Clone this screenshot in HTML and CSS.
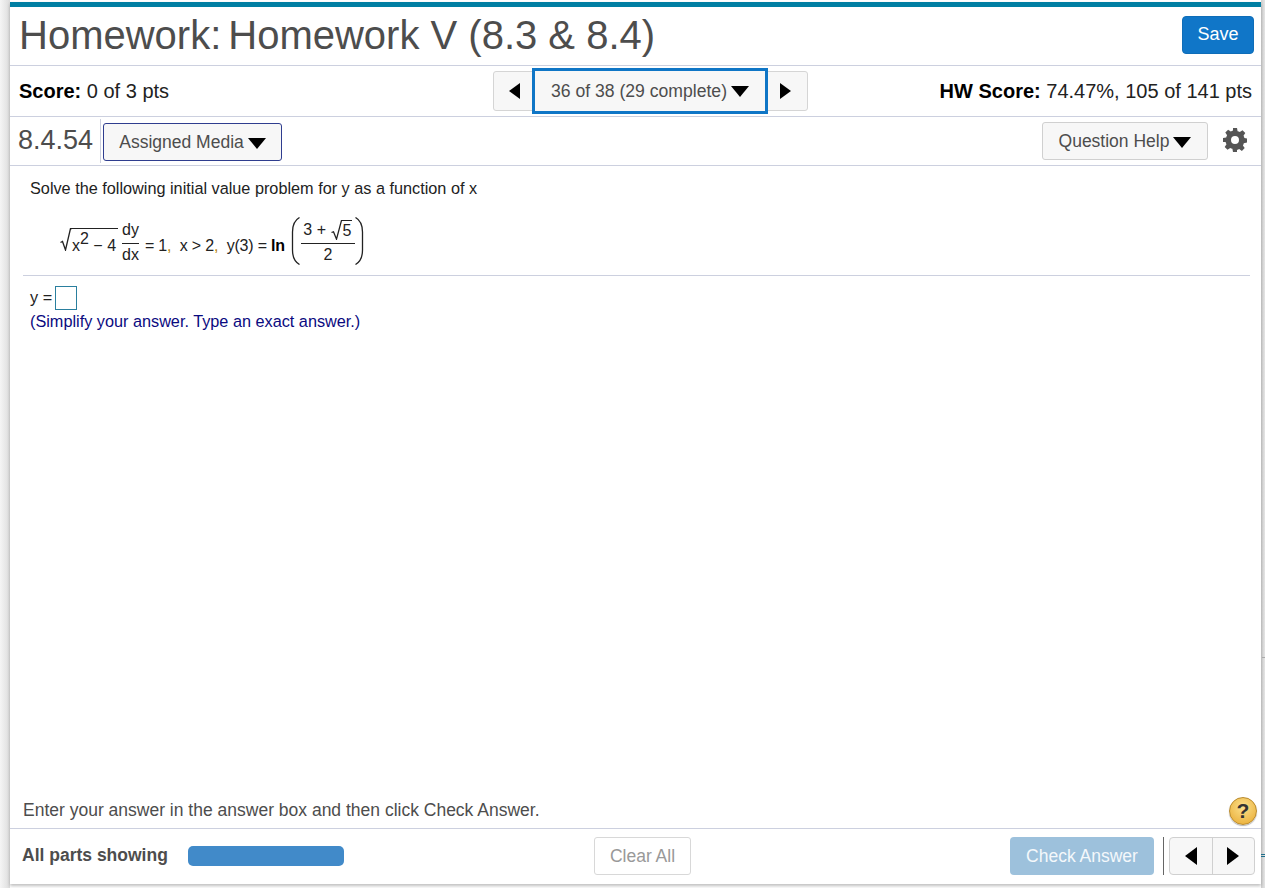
FILE: index.html
```html
<!DOCTYPE html>
<html lang="en">
<head>
<meta charset="utf-8">
<title>Homework V</title>
<link rel="stylesheet" href="styles.css">
</head>
<body>
<main class="panel">
  <header class="title-row">
    <h1 class="title"><span>Homework:</span><span class="title-name">Homework V (8.3 &amp; 8.4)</span></h1>
    <button class="btn-save">Save</button>
  </header>
  <section class="score-row">
    <div class="score"><b>Score:</b> 0 of 3 pts</div>
    <div class="pager">
      <span class="pager-arrow"><i class="tri-left"></i></span>
      <span class="pager-current">36 of 38 (29 complete)<i class="tri-down"></i></span>
      <span class="pager-arrow"><i class="tri-right"></i></span>
    </div>
    <div class="hw-score"><b>HW Score:</b> 74.47%, 105 of 141 pts</div>
  </section>
  <section class="q-row">
    <span class="q-num">8.4.54</span>
    <button class="btn-media">Assigned Media<i class="tri-down"></i></button>
    <span class="spacer"></span>
    <button class="btn-help">Question Help<i class="tri-down"></i></button>
    <svg class="gear" viewBox="0 0 24 24" aria-hidden="true"><path fill="#555" fill-rule="evenodd" d="M10 0h4l.6 3.2c.8.2 1.500.5 2.200.9L19.500 2.300l2.800 2.800-1.800 2.700c.4.700.7 1.400.9 2.200L24 10.600v4l-3.200.6c-.2.800-.5 1.500-.9 2.200l1.800 2.700-2.800 2.800-2.700-1.800c-.7.400-1.400.7-2.200.9L14 24h-4l-.6-3.200c-.8-.2-1.500-.5-2.200-.9l-2.700 1.800-2.800-2.800 1.800-2.700c-.4-.7-.7-1.400-.9-2.200L0 14v-4l3.200-.6c.2-.8.5-1.500.9-2.200L2.300 4.500l2.800-2.800 2.700 1.800c.7-.4 1.400-.7 2.200-.9zM12 8a4 4 0 1 0 0 8 4 4 0 0 0 0-8z"/></svg>
  </section>
  <section class="question">
    <p class="prompt">Solve the following initial value problem for y as a function of x</p>
    <div class="math">
      <span class="sqrt"><svg class="radical" viewBox="0 0 12 23" preserveAspectRatio="none" aria-hidden="true"><path d="M0.500 14.500 L2.500 13.500 L5.500 22 L10.500 .5 L12 .5" fill="none" stroke="#222" stroke-width="1.300"/></svg><span class="radicand">x<sup>2</sup> − 4</span></span>
      <span class="frac frac-dy"><span class="num">dy</span><span class="den">dx</span></span>
      <span class="m-text">= 1<span class="comma">,</span>&nbsp; x &gt; 2<span class="comma">,</span>&nbsp; y(3) = <b>ln</b></span>
      <svg class="paren paren-open" viewBox="0 0 10 48" aria-hidden="true"><path d="M8.500 .5 C4 3 1.500 8 1.500 15 V33 C1.500 40 4 45 8.500 47.500" fill="none" stroke="#222" stroke-width="1.300"/></svg>
      <span class="frac frac-wide"><span class="num">3 + <span class="sqrt small"><svg class="radical" viewBox="0 0 12 23" preserveAspectRatio="none" aria-hidden="true"><path d="M0.500 14.500 L2.500 13.500 L5.500 22 L10.500 .5 L12 .5" fill="none" stroke="#222" stroke-width="1.300"/></svg><span class="radicand">5</span></span></span><span class="den">2</span></span>
      <svg class="paren paren-close" viewBox="0 0 10 48" aria-hidden="true"><path d="M1.500 .5 C6 3 8.500 8 8.500 15 V33 C8.500 40 6 45 1.500 47.500" fill="none" stroke="#222" stroke-width="1.300"/></svg>
    </div>
    <hr class="rule">
    <div class="answer"><span class="answer-label">y =</span><span class="answer-box"></span></div>
    <p class="hint">(Simplify your answer. Type an exact answer.)</p>
  </section>
  <section class="instruction">
    <span>Enter your answer in the answer box and then click Check Answer.</span>
    <span class="help-badge">?</span>
  </section>
  <footer class="footer">
    <b class="parts">All parts showing</b>
    <span class="progress"></span>
    <button class="btn-clear">Clear All</button>
    <span class="spacer"></span>
    <button class="btn-check">Check Answer</button>
    <span class="divider"></span>
    <span class="nav-pair">
      <span class="nav-cell"><i class="tri-left"></i></span>
      <span class="nav-cell"><i class="tri-right"></i></span>
    </span>
  </footer>
</main>
<span class="edge-mark edge-a"></span>
<span class="edge-mark edge-b"></span>
</body>
</html>
```
FILE: styles.css
```css
* { box-sizing: border-box; }
html, body { margin: 0; height: 100%; }
body {
  background:
    linear-gradient(to right, #f5f5f5 0, #dcdcdc 10px, transparent 10px),
    linear-gradient(to left, #e4e4e4 0, #cfcfcf 4px, transparent 4px),
    #fff;
  padding: 2px 4px 4px 10px;
  font-family: "Liberation Sans", Arial, sans-serif;
  color: #4d4d4d;
  overflow: hidden;
  position: relative;
}
.panel {
  width: 1251px;
  height: 882px;
  background: #fff;
  border-top: 5px solid #007fa3;
  box-shadow: 0 2px 3px rgba(0,0,0,.25);
  display: flex;
  flex-direction: column;
}
button { font-family: inherit; cursor: pointer; }
i { display: inline-block; }
.tri-down { width: 0; height: 0; border-left: 9px solid transparent; border-right: 9px solid transparent; border-top: 11px solid #000; margin-left: 4px; vertical-align: -1px; }
.tri-left { width: 0; height: 0; border-top: 9px solid transparent; border-bottom: 9px solid transparent; border-right: 12px solid #000; }
.tri-right { width: 0; height: 0; border-top: 9px solid transparent; border-bottom: 9px solid transparent; border-left: 12px solid #000; }
.spacer { flex: 1; }

.title-row { height: 59px; flex: none; display: flex; align-items: center; justify-content: space-between; padding: 0 7px 2px 9px; border-bottom: 1px solid #ccd0df; }
.title { margin: 0; font-size: 40px; font-weight: 400; }
.title-name { margin-left: 7px; }
.btn-save { width: 72px; height: 38px; background: #1076c8; border: 1px solid #0f6db8; border-radius: 4px; color: #fff; font-size: 18px; padding: 0 0 2px; }

.score-row { height: 51px; flex: none; display: grid; grid-template-columns: 1fr auto 1fr; align-items: center; padding: 0 9px; border-bottom: 1px solid #ccd0df; font-size: 20px; color: #222; }
.score b, .hw-score b { color: #000; }
.hw-score { text-align: right; }
.pager { display: flex; height: 40px; width: 315px; margin-left: 30px; border: 1px solid #d5d5d5; border-radius: 3px; background: #f7f7f7; align-items: center; }
.pager-arrow { width: 38px; flex: none; display: flex; justify-content: center; }
.pager-arrow + .pager-current + .pager-arrow { width: 39px; }
.pager-arrow .tri-left { border-width: 8px 11px 8px 0; margin-left: 2px; }
.pager-arrow .tri-right { border-width: 8px 0 8px 11px; margin-right: 4px; }
.pager-current { width: 236px; flex: none; height: 46px; background: #f7f7f7; border: 3px solid #0f76c6; display: flex; align-items: center; justify-content: center; font-size: 17.6px; color: #4d4d4d; margin: -3px 0; }

.q-row { height: 49px; flex: none; display: flex; align-items: center; padding: 0 14px 0 8px; border-bottom: 1px solid #ccd0df; }
.q-num { font-size: 27px; width: 83px; height: 44px; line-height: 42px; border-right: 1px solid #ccd0df; margin-right: 2px; }
.btn-media { height: 38px; width: 179px; padding: 1px 0 0; background: #f7f7f7; border: 1px solid #2f3d8f; border-radius: 3px; color: #4d4d4d; font-size: 17.5px; margin-top: 1px; }
.btn-help { height: 38px; width: 166px; padding: 0; background: #f7f7f7; border: 1px solid #d0d0d0; border-radius: 3px; color: #4d4d4d; font-size: 17.5px; margin-right: 15px; }
.gear { width: 24px; height: 24px; flex: none; margin-top: -3px; }

.question { flex: 1; padding: 13px 11px 0 13px; color: #222; font-size: 16.25px; min-height: 0; }
.prompt { margin: 0 0 0 7px; line-height: 18px; }
.math { display: flex; align-items: center; margin: 20px 0 0 37px; height: 48px; color: #222; font-size: 16px; }
.sqrt { display: inline-flex; align-items: stretch; height: 23px; margin-bottom: 3px; }
.radical { width: 12px; height: 23px; flex: none; }
.radicand { border-top: 1px solid #222; line-height: 22px; padding: 6px 2px 0 0; white-space: nowrap; }
.radicand sup { font-size: 16px; line-height: 0; vertical-align: 7px; }
.frac { display: inline-flex; flex-direction: column; align-items: center; margin: 4px 0 0; line-height: 20px; }
.frac .num { padding-bottom: 3px; white-space: nowrap; }
.frac .den { border-top: 1px solid #222; width: 100%; text-align: center; line-height: 22px; }
.frac-dy { margin: 4px 6px 0 4px; }
.frac-wide { width: 54px; }
.sqrt.small { height: 20px; margin-bottom: 0; vertical-align: top; }
.sqrt.small .radical { height: 20px; }
.sqrt.small .radicand { line-height: 19px; padding: 0 1px 0 0; }
.m-text { white-space: nowrap; letter-spacing: -.2px; margin-top: 10px; }
.m-text b { color: #000; }
.comma { color: #b8860b; }
.paren { width: 10px; height: 48px; flex: none; }
.paren-open { margin-left: 6px; }
.paren-close { margin-left: -1px; }
.rule { border: 0; border-top: 1px solid #ccd0df; margin: 10px 0 0; }
.answer { display: flex; align-items: flex-start; margin: 10px 0 0 7px; height: 24px; }
.answer-label { line-height: 22px; }
.answer-box { width: 22px; height: 24px; border: 1px solid #2a7f9e; background: #fff; margin-left: 3px; }
.hint { margin: 1px 0 0 7px; line-height: 20px; color: #0a0a80; }

.instruction { height: 42px; flex: none; display: flex; align-items: center; justify-content: space-between; padding: 6px 4px 0 13px; font-size: 17.5px; border-bottom: 1px solid #ccd0df; }
.help-badge { width: 28px; height: 28px; border-radius: 50%; background: radial-gradient(circle at 50% 35%, #fbe08c, #e8a92f); border: 1px solid #b98a2c; box-shadow: 0 1px 1px rgba(0,0,0,.3); color: #333; font-weight: 700; font-size: 21px; display: flex; align-items: center; justify-content: center; margin-top: 1px; }

.footer { height: 55px; flex: none; display: flex; align-items: center; padding: 0 6px 1px 12px; }
.parts { font-size: 17.5px; color: #4d4d4d; width: 166px; margin-bottom: 2px; }
.progress { width: 156px; height: 20px; background: #418ac9; border-radius: 5px; }
.btn-clear { width: 97px; height: 38px; margin-left: 250px; background: #fff; border: 1px solid #d8d8d8; border-radius: 3px; color: #999; font-size: 17.5px; padding: 0; }
.btn-check { width: 144px; height: 38px; background: #9dc1dc; border: 0; border-radius: 4px; color: #f4f8fb; font-size: 17.5px; padding: 0; }
.divider { width: 1px; height: 38px; background: #666; margin: 0 5px 0 9px; }
.nav-pair { display: flex; width: 86px; height: 38px; border: 1px solid #d0d0d0; border-radius: 4px; background: #f7f7f7; }
.nav-cell { flex: 1; display: flex; align-items: center; justify-content: center; }
.nav-cell + .nav-cell { border-left: 1px solid #d0d0d0; }

.edge-mark { position: absolute; }
.edge-a { left: 1262px; top: 657px; width: 3px; height: 1px; background: #aaa; }
.edge-b { left: 1261px; top: 854px; width: 4px; height: 3px; border-top: 1px solid #1f6f8b; border-bottom: 1px solid #1f6f8b; }
```
